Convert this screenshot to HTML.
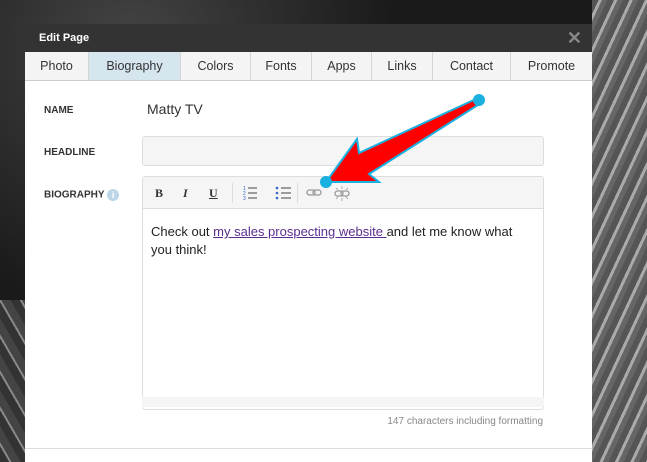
<html><head><style>
body{margin:0;width:647px;height:462px;overflow:hidden;font-family:"Liberation Sans",sans-serif;background:#1e1e1e;position:relative}
.bg{position:absolute;inset:0;background:radial-gradient(circle at 20% 10%,#444 0,#1a1a1a 40%),#222}
.lf{position:absolute;left:0;top:300px;width:25px;height:162px;background:repeating-linear-gradient(60deg,#333 0 8px,#888 8px 10px,#444 10px 18px)}
.rt{position:absolute;left:592px;top:0;width:55px;height:462px;background:repeating-linear-gradient(115deg,#555 0 6px,#aaa 6px 9px,#666 9px 14px)}
.modal{position:absolute;left:25px;top:24px;width:567px;height:438px;background:#fff}
.hd{height:28px;background:#333;color:#fff;font-weight:bold;font-size:11px;line-height:28px;padding-left:14px;position:relative}
.hd span{position:absolute;right:10px;top:0;color:#888;font-size:18px}
.tabs{display:flex;height:28px;border-bottom:1px solid #ccc;background:#f4f4f4}
.tabs div{border-right:1px solid #d5d5d5;text-align:center;font-size:12.5px;line-height:28px;color:#333}
.lbl{position:absolute;left:19px;font-size:10px;font-weight:bold;color:#333}
.inp{position:absolute;left:117px;width:400px;border:1px solid #ddd;border-radius:3px;background:#f5f5f5}
</style></head><body>
<div class="bg"></div><div class="lf"></div><div class="rt"></div>
<div class="modal">
<div class="hd">Edit Page<span>✕</span></div>
<div class="tabs"><div style="width:63px">Photo</div><div style="width:91px;background:#d6e6ef">Biography</div><div style="width:69px">Colors</div><div style="width:60px">Fonts</div><div style="width:59px">Apps</div><div style="width:60px">Links</div><div style="width:77px">Contact</div><div style="width:81px;border:0">Promote</div></div>
<div class="lbl" style="top:81px">NAME</div>
<div style="position:absolute;left:122px;top:77px;font-size:14px;color:#333">Matty TV</div>
<div class="lbl" style="top:123px">HEADLINE</div>
<div class="inp" style="top:112px;height:28px"></div>
<div class="lbl" style="top:165px">BIOGRAPHY <span style="display:inline-block;width:12px;height:12px;border-radius:50%;background:#bcd6e8;color:#fff;font-size:9px;text-align:center;line-height:12px;vertical-align:middle">i</span></div>
<div class="inp" style="top:152px;height:232px;background:#fff">
<div style="height:31px;background:#f5f5f5;border-bottom:1px solid #ddd;font-size:12px;color:#333;position:relative">
<b style="position:absolute;left:12px;top:9px;font-family:'Liberation Serif'">B</b>
<i style="position:absolute;left:40px;top:9px;font-family:'Liberation Serif';font-weight:bold">I</i>
<u style="position:absolute;left:66px;top:9px;font-family:'Liberation Serif';font-weight:bold">U</u>
<span style="position:absolute;left:89px;top:6px;width:1px;height:20px;background:#ddd"></span>
<svg style="position:absolute;left:100px;top:8px" width="50" height="16"><g fill="#36c" font-size="5" font-family="Liberation Sans"><text x="0" y="5">1</text><text x="0" y="10">2</text><text x="0" y="15">3</text></g><g stroke="#444" stroke-width="1"><path d="M5 3h9M5 8h9M5 13h9M38 3h10M38 8h10M38 13h10"/></g><g fill="#36c"><circle cx="34" cy="3" r="1.3"/><circle cx="34" cy="8" r="1.3"/><circle cx="34" cy="13" r="1.3"/></g></svg>
<span style="position:absolute;left:154px;top:6px;width:1px;height:20px;background:#ddd"></span>
<svg style="position:absolute;left:163px;top:8px" width="50" height="16"><g fill="none" stroke="#999" stroke-width="1.3"><rect x="1" y="5" width="8" height="5" rx="2.5"/><rect x="7" y="5" width="8" height="5" rx="2.5"/><rect x="29" y="6" width="8" height="5" rx="2.5"/><rect x="35" y="6" width="8" height="5" rx="2.5"/><path d="M30 3l2 2M36 1v3M42 3l-2 2M30 14l2-2M42 14l-2-2M36 16v-3" stroke-width="0.8"/></g></svg>
</div>
<div style="padding:14px 8px;font-size:13px;line-height:18px;color:#222">Check out <a style="color:#5a2d91;text-decoration:underline">my sales prospecting website </a>and let me know what you think!</div>
</div>
<div style="position:absolute;left:117px;top:373px;width:402px;height:10px;background:#f5f5f5"></div>
<div style="position:absolute;right:49px;top:392px;font-size:10px;color:#888">147 characters including formatting</div>
<div style="position:absolute;left:0;right:0;top:424px;border-top:1px solid #ddd"></div>
</div>
<svg style="position:absolute;left:0;top:0" width="647" height="462">
<polygon points="478,98 359,153 357,139 326,182 379,182 369,174 481,103" fill="#f00" stroke="#1ab0e0" stroke-width="2" stroke-linejoin="miter"/>
<circle cx="479" cy="100" r="6" fill="#1ab0e0"/>
<circle cx="326" cy="182" r="6" fill="#1ab0e0"/>
</svg>
</body></html>
